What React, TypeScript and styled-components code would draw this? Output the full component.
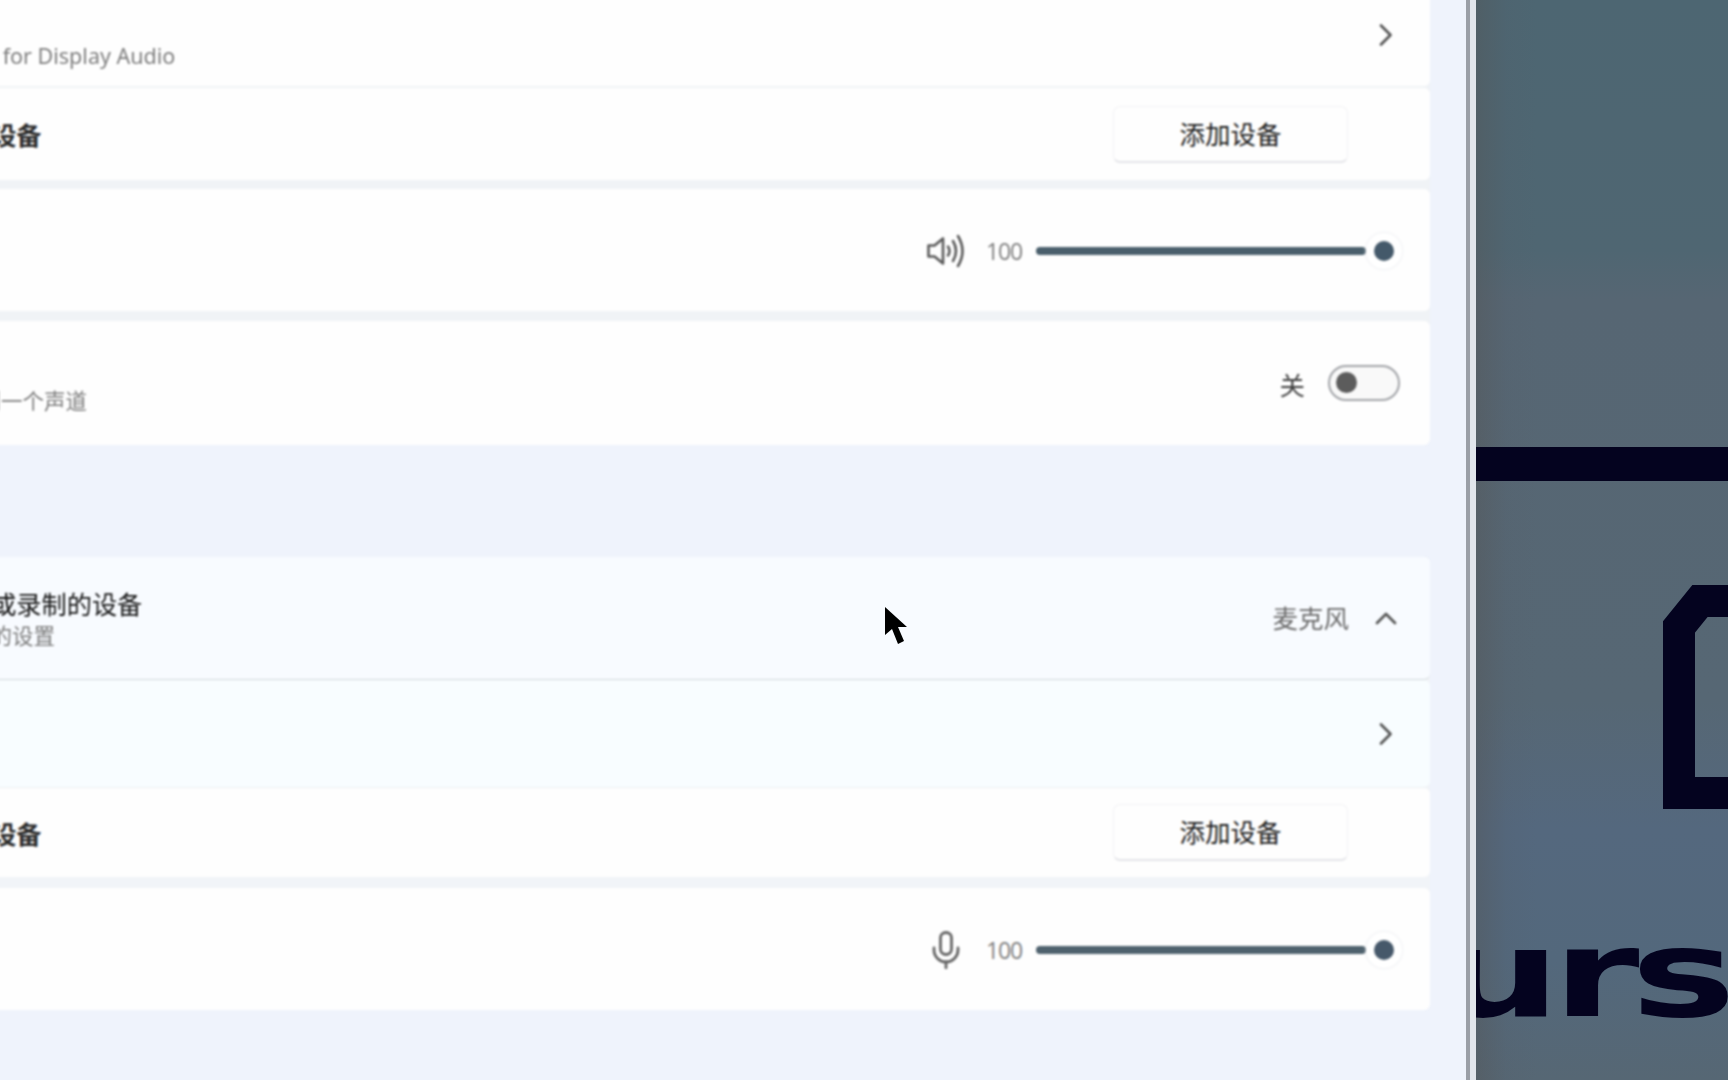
import React from "react";
import styled, { createGlobalStyle } from "styled-components";

const Global = createGlobalStyle`
  html, body { margin: 0; padding: 0; background: #eff3fc; overflow: hidden; }
  * { box-sizing: border-box; }
`;

const FONT = `"Noto Sans", "Noto Sans CJK SC", sans-serif`;

const Screen = styled.div`
  position: relative;
  display: flex;
  width: 1728px;
  height: 1080px;
  overflow: hidden;
  font-family: ${FONT};
`;

const Settings = styled.main`
  width: 1466px;
  flex: none;
  height: 1080px;
  overflow: hidden;
  background: #eff3fc;
`;

const Stack = styled.div`
  display: flex;
  flex-direction: column;
  width: 1670px;
  margin-left: -240px;
  margin-top: -16px;
  filter: blur(0.8px);
`;

const Group = styled.div<{ $bg: string }>`
  display: flex;
  flex-direction: column;
  flex: none;
  background: ${(p) => p.$bg};
  border-radius: 0 6px 6px 0;
`;

const Row = styled.section<{ $h: number; $bg?: string; $pr: number; $line?: string; $after?: number }>`
  display: flex;
  align-items: center;
  justify-content: space-between;
  height: ${(p) => p.$h}px;
  flex: none;
  padding: 0 ${(p) => p.$pr}px 0 80px;
  background: ${(p) => p.$bg ?? "#fefefe"};
  border-radius: 0 6px 6px 0;
  border-bottom: ${(p) => (p.$line ? `1px solid ${p.$line}` : "none")};
  margin-bottom: ${(p) => p.$after ?? 0}px;
`;

const TextBlock = styled.div<{ $down?: number }>`
  display: flex;
  flex-direction: column;
  gap: 1px;
  margin-top: ${(p) => p.$down ?? 0}px;
  white-space: nowrap;
`;

const Title = styled.div<{ $bold?: boolean }>`
  font-size: 25.2px;
  line-height: 31px;
  font-weight: ${(p) => (p.$bold ? 700 : 400)};
  padding-top: ${(p) => (p.$bold ? 3 : 0)}px;
  color: ${(p) => (p.$bold ? "#2b2b2b" : "#141414")};
`;

const Sub = styled.div<{ $nudge?: number }>`
  font-size: 21.5px;
  line-height: 30px;
  color: #7d7d7d;
  margin-left: ${(p) => p.$nudge ?? 0}px;
`;

const Controls = styled.div<{ $down?: number }>`
  display: flex;
  align-items: center;
  margin-top: ${(p) => p.$down ?? 0}px;
`;

const Status = styled.span<{ $dark?: boolean; $gap: number }>`
  font-size: 25.5px;
  line-height: 30px;
  color: ${(p) => (p.$dark ? "#3c3c3c" : "#6a6a6a")};
  margin-right: ${(p) => p.$gap}px;
  padding-top: ${(p) => (p.$dark ? 4 : 0)}px;
`;

const AddButton = styled.button`
  width: 235px;
  height: 57px;
  background: #fefefe;
  border: 1px solid #f3f3f5;
  border-bottom: 2px solid #e4e5e9;
  border-radius: 7px;
  font-family: ${FONT};
  font-size: 25.5px;
  font-weight: 400;
  line-height: 30px;
  color: #1c1c1c;
  padding: 0;
`;

const IconBox = styled.span`
  display: flex;
  width: 38px;
  justify-content: center;
  margin-right: 21px;
`;

const Value = styled.span`
  width: 36px;
  margin-right: 14px;
  font-family: "Open Sans", sans-serif;
  font-size: 23px;
  font-weight: 400;
  letter-spacing: -1.2px;
  line-height: 30px;
  color: #7e7e7e;
`;

const Track = styled.div<{ $color: string }>`
  width: 330px;
  height: 8px;
  border-radius: 4px;
  background: ${(p) => p.$color};
`;

const Thumb = styled.div<{ $color: string }>`
  display: flex;
  align-items: center;
  justify-content: center;
  width: 36px;
  height: 36px;
  border-radius: 50%;
  background: #fff;
  box-shadow: 0 0 3px #e2e5ea;
  &::after {
    content: "";
    width: 20px;
    height: 20px;
    border-radius: 50%;
    background: ${(p) => p.$color};
  }
`;

const Toggle = styled.div`
  display: flex;
  align-items: center;
  width: 72px;
  height: 36px;
  padding-left: 6px;
  border-radius: 18px;
  border: 2px solid #a2a4a8;
  background: #f9f9f9;
  &::before {
    content: "";
    width: 21px;
    height: 21px;
    margin-top: -1px;
    border-radius: 50%;
    background: #5c5c5c;
  }
`;

const SectionSpace = styled.div`
  height: 112px;
  flex: none;
  display: flex;
  align-items: flex-end;
  padding: 0 0 16px 80px;
  font-size: 25px;
  font-weight: 600;
  color: #2b2b2b;
`;

const Splitter = styled.div`
  width: 10px;
  flex: none;
  border-left: 4px solid #9a9ea6;
  background: #e2e6ec;
`;

const Wallpaper = styled.aside`
  position: relative;
  flex: 1;
  height: 1080px;
  overflow: hidden;
  background:
    linear-gradient(90deg, rgba(84, 84, 84, 0.4) 0, rgba(84, 90, 100, 0.12) 30px, rgba(84, 90, 100, 0) 60px),
    linear-gradient(180deg, #4d6672 0, #4f6672 250px, #566673 300px, #566774 700px, #54687e 830px, #53687c 960px, #566774 1080px);
`;

const LogoBar = styled.div`
  position: absolute;
  left: 0;
  right: 0;
  top: 447px;
  height: 34px;
  background: #04031f;
`;

const LogoMark = styled.svg`
  position: absolute;
  left: 187px;
  top: 585px;
`;

const LogoWord = styled.span`
  position: absolute;
  left: -41px;
  top: 889px;
  font-family: "DejaVu Sans", sans-serif;
  font-weight: 700;
  font-size: 122px;
  line-height: 170px;
  letter-spacing: -6px;
  color: #04031f;
  white-space: nowrap;
  transform: scaleX(1.45);
  transform-origin: left top;
`;

const Pointer = styled.svg`
  position: absolute;
  left: 884px;
  top: 606px;
`;

const ChevronSvg = styled.svg`
  display: block;
`;

const Chevron = ({ dir }: { dir: "right" | "up" }) => (
  <ChevronSvg width="24" height="24" viewBox="0 0 24 24" fill="none" stroke="#555" strokeWidth="2.7" strokeLinecap="round" strokeLinejoin="round">
    {dir === "right" ? <path d="M7 2.5 16.5 12 7 21.5" /> : <path d="M3 17 12 8 21 17" />}
  </ChevronSvg>
);

const Speaker = () => (
  <svg width="38" height="34" viewBox="0 0 38 34" fill="none" stroke="#5a5a5a" strokeWidth="2.6" strokeLinecap="round" strokeLinejoin="round">
    <path d="M1.5 11.5h6l8.5-7v25l-8.5-7h-6z" />
    <path d="M21 12.5q3 4.5 0 9" />
    <path d="M26 7q6 10 0 20" />
    <path d="M31 2q9 15 0 30" />
  </svg>
);

const Mic = () => (
  <svg width="28" height="38" viewBox="0 0 28 38" fill="none" stroke="#666" strokeWidth="2.8" strokeLinecap="round">
    <rect x="8.5" y="1.5" width="11" height="22" rx="5.5" />
    <path d="M2 17v2a12 12 0 0 0 24 0v-2" />
    <path d="M14 31v6" />
  </svg>
);

const Slider = ({ icon, color, knob }: { icon: React.ReactNode; color: string; knob: string }) => (
  <Controls $down={2}>
    <IconBox>{icon}</IconBox>
    <Value>100</Value>
    <Track $color={color} />
    <Thumb $color={knob} />
  </Controls>
);

export default function App() {
  return (
    <>
      <Global />
      <Screen>
        <Settings>
          <Stack>
            <Group $bg="#f0f3f6">
              <Row $h={102} $pr={32} $after={2}>
                <TextBlock $down={10}>
                  <Title>扬声器</Title>
                  <Sub $nudge={-164}>Intel® Smart Sound Technology for Display Audio</Sub>
                </TextBlock>
                <Chevron dir="right" />
              </Row>
              <Row $h={92} $pr={82} $after={9}>
                <Title $bold>配对新的输出设备</Title>
                <AddButton>添加设备</AddButton>
              </Row>
              <Row $h={122} $pr={28} $after={10}>
                <Title>音量</Title>
                <Slider icon={<Speaker />} color="#4a5f6c" knob="#44596a" />
              </Row>
              <Row $h={124} $pr={30}>
                <TextBlock $down={4}>
                  <Title>单声道音频</Title>
                  <Sub $nudge={-11}>将左右音频合并到一个声道</Sub>
                </TextBlock>
                <Controls>
                  <Status $dark $gap={23}>关</Status>
                  <Toggle />
                </Controls>
              </Row>
            </Group>
            <SectionSpace>输入</SectionSpace>
            <Group $bg="#f1f4f8">
              <Row $h={123} $pr={32} $bg="#f8fbff" $line="#d2d7da">
                <TextBlock $down={4}>
                  <Title>选择用于讲话或录制的设备</Title>
                  <Sub>应用可能有自己的设置</Sub>
                </TextBlock>
                <Controls>
                  <Status $gap={25}>麦克风</Status>
                  <Chevron dir="up" />
                </Controls>
              </Row>
              <Row $h={108} $pr={32} $bg="#f8fdff" $line="#eceff2">
                <Title>麦克风</Title>
                <Chevron dir="right" />
              </Row>
              <Row $h={89} $pr={82} $after={11}>
                <Title $bold>配对新的输入设备</Title>
                <AddButton>添加设备</AddButton>
              </Row>
              <Row $h={122} $pr={28}>
                <Title>音量</Title>
                <Slider icon={<Mic />} color="#4f626e" knob="#46586a" />
              </Row>
            </Group>
          </Stack>
        </Settings>
        <Splitter />
        <Wallpaper>
          <LogoBar />
          <LogoMark width="66" height="225" viewBox="0 0 66 225" fill="none" stroke="#04031f" strokeWidth="32">
            <path d="M16 224V42L37 16H66M16 208H66" />
          </LogoMark>
          <LogoWord>urs</LogoWord>
        </Wallpaper>
        <Pointer width="24" height="40" viewBox="0 0 24 40">
          <path d="M1 1v28l7-6 6 15 6-3-6-14h9z" fill="#000" />
        </Pointer>
      </Screen>
    </>
  );
}
